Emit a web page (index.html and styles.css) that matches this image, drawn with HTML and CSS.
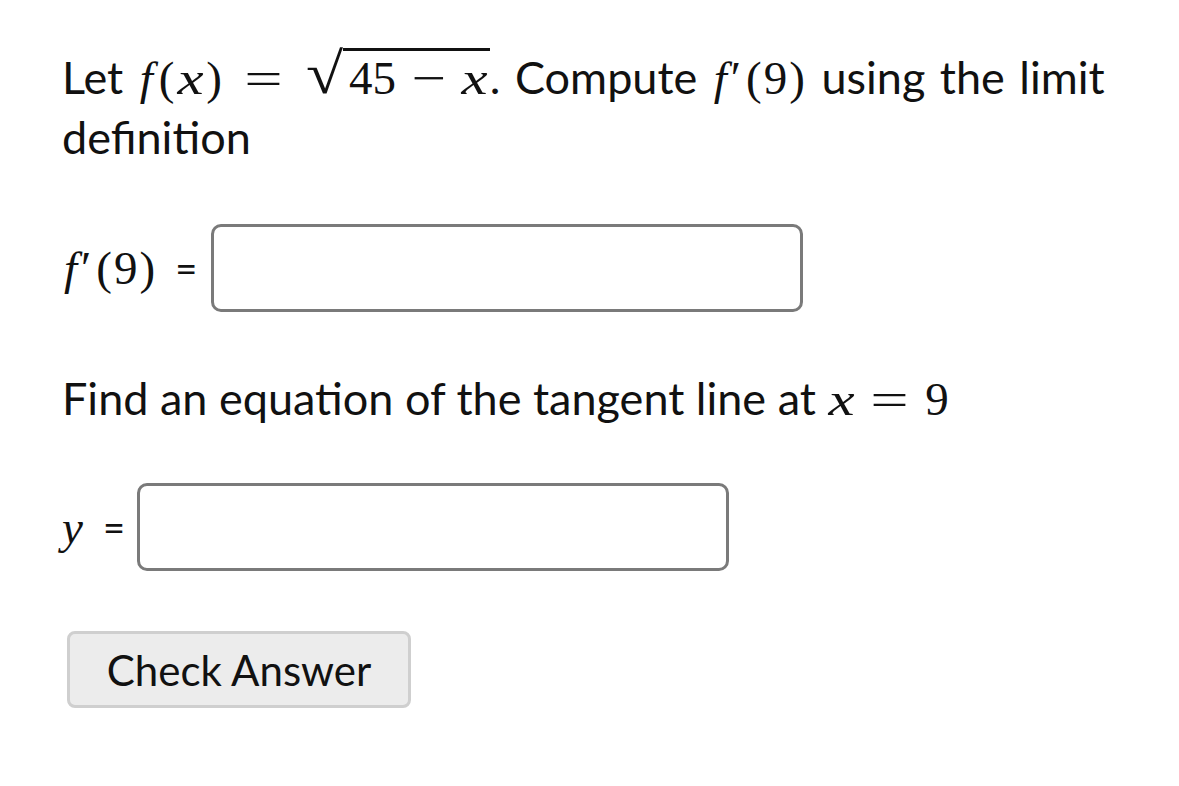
FILE: index.html
```html
<!DOCTYPE html>
<html>
<head>
<meta charset="utf-8">
<link rel="stylesheet" href="styles.css">
</head>
<body>
<div class="question">
  <p class="prompt prompt-first">Let <span class="m"><i class="mi mi-f">f</i><span class="paren">(</span><i class="mi mi-x">x</i><span class="paren paren-wide">)</span><span class="rel">=</span><span class="sqrt"><span class="rad">√</span><span class="radicand"><span class="num">45</span><span class="bin">−</span><i class="mi mi-x">x</i></span></span></span>. Compute <span class="m"><i class="mi mi-f">f</i><span class="prime">′</span><span class="paren">(</span><span class="num">9</span><span class="paren">)</span></span> using the limit definition</p>

  <div class="row row-first">
    <span class="m"><i class="mi mi-f">f</i><span class="prime">′</span><span class="paren">(</span><span class="num">9</span><span class="paren">)</span></span>
    <span class="eq">=</span>
    <div class="answer-box"></div>
  </div>

  <p class="prompt prompt-second">Find an equation of the tangent line at <span class="m"><i class="mi mi-x">x</i><span class="rel">=</span><span class="num">9</span></span></p>

  <div class="row row-second">
    <span class="m"><i class="mi">y</i></span>
    <span class="eq">=</span>
    <div class="answer-box"></div>
  </div>

  <button class="check-btn">Check Answer</button>
</div>
</body>
</html>
```

FILE: styles.css
```css
html, body {
  margin: 0;
  padding: 0;
  background: #ffffff;
}

body {
  font-family: Lato, "Open Sans", sans-serif;
  color: #111111;
}

.question {
  width: 1080px;
  padding: 47px 0 0 62px;
}

.prompt {
  margin: 0;
  font-size: 45px;
  line-height: 60px;
}

.prompt-first {
  word-spacing: 3px;
}

.m {
  font-family: "Liberation Serif", "Times New Roman", serif;
  font-size: 47px;
  line-height: 1;
  white-space: nowrap;
  word-spacing: 0;
  color: #111;
}

.mi {
  font-style: italic;
  padding: 0 2px 0 0;
}

.mi-f {
  padding: 0 4px 0 2px;
}

.mi-x {
  display: inline-block;
  padding: 0 3px 0 4px;
  transform: scaleX(1.25);
}

.paren {
  padding: 0 2px;
}

.paren-wide {
  padding-right: 7px;
}

.prime {
  padding: 0 3px 0 0;
}

.rel {
  display: inline-block;
  width: 35px;
  margin: 0 18px 0 17px;
  text-align: center;
  transform: scaleX(1.45);
}

.bin {
  display: inline-block;
  width: 30px;
  margin: 0 16px 0 18px;
  text-align: center;
  transform: scaleX(1.3);
}

.sqrt {
  display: inline-flex;
  align-items: flex-end;
}

.rad {
  font-size: 50px;
  line-height: 1;
  display: inline-block;
  width: 44px;
  text-align: right;
  transform: scale(1.35, 1.16);
  transform-origin: right bottom;
}

.radicand {
  border-top: 3px solid #111;
  padding: 4px 2px 0 6px;
  line-height: 1;
}

.row {
  display: flex;
  align-items: center;
}

.row-first {
  margin-top: 57px;
}

.row .m {
  margin-right: 18px;
}

.eq {
  font-size: 38px;
  margin-right: 14px;
}

.row-second .eq {
  margin-right: 12px;
}

.answer-box {
  width: 586px;
  height: 82px;
  border: 3px solid #7a7a7a;
  border-radius: 10px;
  background: #fff;
}

.prompt-second {
  margin-top: 56px;
}

.row-second {
  margin-top: 55px;
}

.check-btn {
  margin-top: 60px;
  margin-left: 5px;
  width: 344px;
  height: 77px;
  font-family: Lato, "Open Sans", sans-serif;
  font-size: 42px;
  color: #111;
  background: #ececec;
  border: 3px solid #cfcfcf;
  border-radius: 8px;
}
```
